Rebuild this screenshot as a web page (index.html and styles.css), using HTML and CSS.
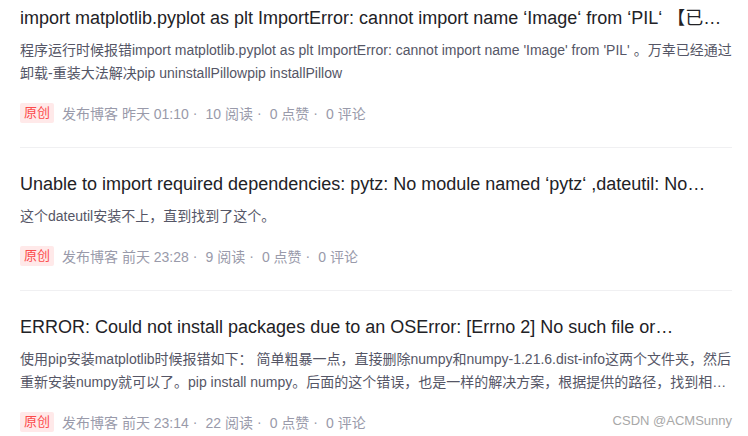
FILE: index.html
```html
<!DOCTYPE html>
<html lang="zh-CN">
<head>
<meta charset="utf-8">
<title>文章列表</title>
<link rel="stylesheet" href="styles.css">
</head>
<body>
<div class="list">
  <div class="item">
    <h4 class="title">import matplotlib.pyplot as plt ImportError: cannot import name ‘Image‘ from ‘PIL‘ 【已…</h4>
    <p class="desc">程序运行时候报错import matplotlib.pyplot as plt ImportError: cannot import name 'Image' from 'PIL' 。万幸已经通过卸载-重装大法解决pip uninstallPillowpip installPillow</p>
    <div class="meta">
      <span class="badge">原创</span>
      <span class="mi">发布博客 昨天 01:10</span><span class="dot">·</span>
      <span class="mi">10 阅读</span><span class="dot">·</span>
      <span class="mi">0 点赞</span><span class="dot">·</span>
      <span class="mi">0 评论</span>
    </div>
  </div>
  <div class="item">
    <h4 class="title">Unable to import required dependencies: pytz: No module named ‘pytz‘ ,dateutil: No…</h4>
    <p class="desc">这个dateutil安装不上，直到找到了这个。</p>
    <div class="meta">
      <span class="badge">原创</span>
      <span class="mi">发布博客 前天 23:28</span><span class="dot">·</span>
      <span class="mi">9 阅读</span><span class="dot">·</span>
      <span class="mi">0 点赞</span><span class="dot">·</span>
      <span class="mi">0 评论</span>
    </div>
  </div>
  <div class="item">
    <h4 class="title">ERROR: Could not install packages due to an OSError: [Errno 2] No such file or…</h4>
    <p class="desc">使用pip安装matplotlib时候报错如下： 简单粗暴一点，直接删除numpy和numpy-1.21.6.dist-info这两个文件夹，然后重新安装numpy就可以了。pip install numpy。后面的这个错误，也是一样的解决方案，根据提供的路径，找到相…</p>
    <div class="meta">
      <span class="badge">原创</span>
      <span class="mi">发布博客 前天 23:14</span><span class="dot">·</span>
      <span class="mi">22 阅读</span><span class="dot">·</span>
      <span class="mi">0 点赞</span><span class="dot">·</span>
      <span class="mi">0 评论</span>
    </div>
  </div>
</div>
<div class="watermark">CSDN @ACMSunny</div>
</body>
</html>
```
FILE: styles.css
```css
html, body {
  margin: 0;
  padding: 0;
  background: #ffffff;
}
body {
  font-family: "Liberation Sans", Arial, "Noto Sans CJK SC", sans-serif;
  width: 748px;
  height: 436px;
  overflow: hidden;
  position: relative;
}
.list {
  padding: 0 16px 0 20px;
}
.item {
  padding: 24px 0 24px;
  border-bottom: 1px solid #f0f0f2;
}
.item:first-child {
  padding-top: 6px;
}
.title {
  margin: 0;
  font-size: 18px;
  line-height: 24px;
  font-weight: normal;
  color: #222226;
  white-space: nowrap;
  overflow: hidden;
}
.desc {
  margin: 9px 0 0;
  font-size: 14px;
  line-height: 23px;
  color: #555666;
}
.meta {
  margin-top: 18px;
  display: flex;
  align-items: center;
  height: 20px;
  font-size: 14px;
  color: #999aaa;
}
.badge {
  display: inline-block;
  height: 20px;
  line-height: 20px;
  padding: 0 4px;
  margin-right: 8px;
  font-size: 13px;
  color: #fc4b4b;
  background: #ffe9e9;
  border-radius: 2px;
}
.mi {
  white-space: nowrap;
}
.dot {
  margin: 0 8px 0 4px;
}
.watermark {
  position: absolute;
  right: 16px;
  bottom: 8px;
  font-size: 13px;
  color: #a8a8a8;
  font-family: "Liberation Sans", Arial, sans-serif;
}
```
